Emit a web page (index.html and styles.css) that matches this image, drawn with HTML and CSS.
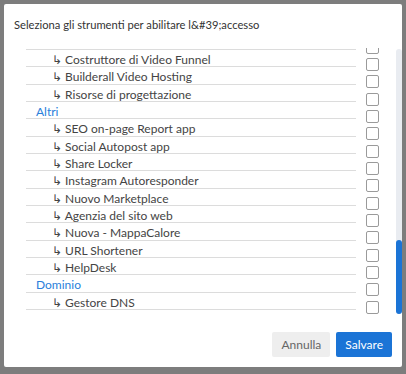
FILE: index.html
```html
<!DOCTYPE html>
<html lang="it">

<head>
    <meta charset="UTF-8">
    <meta name="viewport" content="width=device-width, initial-scale=1.0">
    <title>Accesso strumenti</title>
    <link rel="stylesheet" href="styles.css">
</head>

<body>
    <div class="modal">
        <div class="modal-header">
            <p>Seleziona gli strumenti per abilitare l&amp;#39;accesso</p>
        </div>

        <div class="modal-body">
            <div class="tools">
                <!-- list is scrolled down: only the tail of the previous row shows -->
                <div class="row"><span class="label"></span><span class="check"></span></div>
                <div class="row"><span class="label">&#8627; Costruttore di Video Funnel</span><span class="check"></span></div>
                <div class="row"><span class="label">&#8627; Builderall Video Hosting</span><span class="check"></span></div>
                <div class="row"><span class="label">&#8627; Risorse di progettazione</span><span class="check"></span></div>
                <div class="row group"><span class="label">Altri</span><span class="check"></span></div>
                <div class="row"><span class="label">&#8627; SEO on-page Report app</span><span class="check"></span></div>
                <div class="row"><span class="label">&#8627; Social Autopost app</span><span class="check"></span></div>
                <div class="row"><span class="label">&#8627; Share Locker</span><span class="check"></span></div>
                <div class="row"><span class="label">&#8627; Instagram Autoresponder</span><span class="check"></span></div>
                <div class="row"><span class="label">&#8627; Nuovo Marketplace</span><span class="check"></span></div>
                <div class="row"><span class="label">&#8627; Agenzia del sito web</span><span class="check"></span></div>
                <div class="row"><span class="label">&#8627; Nuova - MappaCalore</span><span class="check"></span></div>
                <div class="row"><span class="label">&#8627; URL Shortener</span><span class="check"></span></div>
                <div class="row"><span class="label">&#8627; HelpDesk</span><span class="check"></span></div>
                <div class="row group"><span class="label">Dominio</span><span class="check"></span></div>
                <div class="row"><span class="label">&#8627; Gestore DNS</span><span class="check"></span></div>
            </div>
            <div class="scroll-track"><div class="scroll-thumb"></div></div>
        </div>

        <div class="modal-footer">
            <button class="btn btn-cancel">Annulla</button>
            <button class="btn btn-save">Salvare</button>
        </div>
    </div>
</body>

</html>
```

FILE: styles.css
```css
body {
    margin: 0;
    background-color: #7d7d7d;
    font-family: Lato, "Open Sans", sans-serif;
    height: 374px;
    overflow: hidden;
}

.modal {
    margin: 4px 4px 0 4px;
    width: 398px;
    height: 363px;
    background-color: #fff;
    border-radius: 2px;
    display: flex;
    flex-direction: column;
}

.modal-header {
    padding: 12px 10px 14px 10px;
}

.modal-header p {
    margin: 0;
    font-size: 11.2px;
    line-height: 18px;
    color: #333;
}

.modal-body {
    position: relative;
    height: 266px;
    overflow: hidden;
    padding-left: 22px;
}

.tools {
    margin-top: -15.333px;
}

.row {
    display: flex;
    align-items: flex-start;
    height: 17.333px;
}

.label {
    box-sizing: border-box;
    width: 330px;
    height: 17.333px;
    border-bottom: 1px solid #dcdcdc;
    padding-left: 26px;
    padding-top: 2px;
    font-size: 12px;
    line-height: 15px;
    color: #444;
    white-space: nowrap;
}

.group .label {
    padding-left: 10px;
    color: #2a7fdb;
}

.check {
    box-sizing: border-box;
    width: 13px;
    height: 13px;
    margin-top: 8px;
    margin-left: 10px;
    border: 1px solid #9a9a9a;
    border-radius: 2px;
    background-color: #fff;
}

.scroll-track {
    position: absolute;
    top: 1px;
    right: 0;
    width: 6px;
    height: 265px;
    background-color: #e9ecf1;
    border-radius: 3px;
    display: flex;
    flex-direction: column;
    justify-content: flex-end;
}

.scroll-thumb {
    height: 74px;
    background-color: #1b74d6;
    border-radius: 3px;
}

.modal-footer {
    display: flex;
    justify-content: flex-end;
    gap: 6px;
    padding: 18px 10px 10px 10px;
}

.btn {
    height: 25px;
    padding: 0 9px;
    border: none;
    border-radius: 2px;
    font-family: Lato, "Open Sans", sans-serif;
    font-size: 12px;
    cursor: pointer;
}

.btn-cancel {
    background-color: #eeeeee;
    color: #666;
}

.btn-save {
    background-color: #1b74d6;
    color: #fff;
}
```
